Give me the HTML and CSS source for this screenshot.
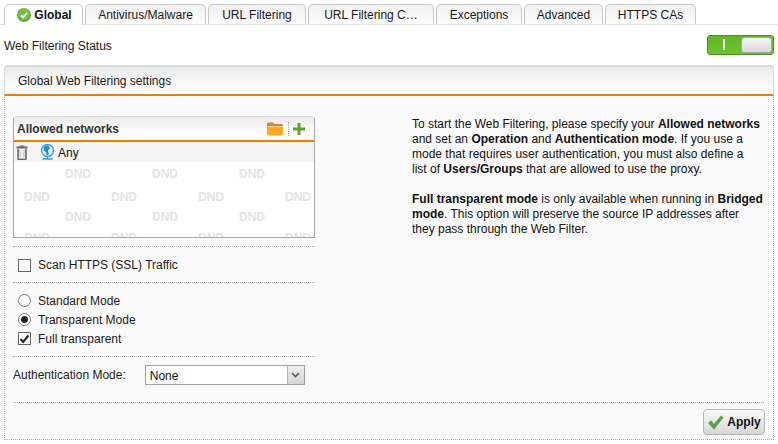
FILE: index.html
```html
<!DOCTYPE html>
<html lang="en">
<head>
<meta charset="utf-8">
<title>Web Filtering</title>
<link rel="stylesheet" href="styles.css">
</head>
<body>
<nav class="tabs">
  <div class="tab tab-active tab-global">
    <svg class="tab-icon" width="14" height="14" viewBox="0 0 16 16"><circle cx="8" cy="8" r="8" fill="#5fae34"/><circle cx="8" cy="7" r="6.500" fill="#74c043"/><path d="M4.5 8.2 7 10.8 11.6 5.4" fill="none" stroke="#fff" stroke-width="2.100"/></svg>
    <span>Global</span>
  </div>
  <div class="tab tab-antivirus">Antivirus/Malware</div>
  <div class="tab tab-url">URL Filtering</div>
  <div class="tab tab-urlc">URL Filtering C…</div>
  <div class="tab tab-exc">Exceptions</div>
  <div class="tab tab-adv">Advanced</div>
  <div class="tab tab-ca">HTTPS CAs</div>
</nav>

<div class="status-row">
  <span class="status-label">Web Filtering Status</span>
  <div class="toggle"><span class="toggle-bar"></span><span class="toggle-knob"></span></div>
</div>

<section class="panel">
  <header class="panel-header">Global Web Filtering settings</header>
  <div class="panel-body">
    <div class="columns">
      <div class="left">
        <div class="netbox">
          <div class="netbox-head">
            <span>Allowed networks</span>
            <div class="netbox-tools">
              <svg width="16" height="14" viewBox="0 0 16 14"><path d="M0 2Q0 .5 1.500 .5H6L7.500 2H14.500Q16 2 16 3.500V4H0Z" fill="#c98a35"/><path d="M0 4.500H16V12Q16 13.500 14.500 13.500H1.500Q0 13.500 0 12Z" fill="#fdab1e"/></svg>
              <span class="tool-sep"></span>
              <svg width="12" height="12" viewBox="0 0 12 12"><path d="M4.500 0H7.500V4.500H12V7.500H7.500V12H4.500V7.500H0V4.500H4.500Z" fill="#5aa527"/></svg>
            </div>
          </div>
          <div class="netbox-body">
            <div class="watermark">
              <div class="wm-row wm-a wm-1"><span>DND</span><span>DND</span><span>DND</span></div>
              <div class="wm-row wm-b wm-2"><span>DND</span><span>DND</span><span>DND</span><span>DND</span></div>
              <div class="wm-row wm-a wm-3"><span>DND</span><span>DND</span><span>DND</span></div>
              <div class="wm-row wm-b wm-4"><span>DND</span><span>DND</span><span>DND</span><span>DND</span></div>
            </div>
            <div class="net-row">
              <svg class="trash" width="12" height="15" viewBox="0 0 12 15"><path d="M.5 2.500H11.500" stroke="#666" stroke-width="2" fill="none"/><rect x="3.500" y=".5" width="5" height="1.500" fill="#777"/><path d="M2 4V13.500Q2 14.500 3 14.500H9Q10 14.500 10 13.500V4" fill="#eee" stroke="#666" stroke-width="1.500"/><path d="M4 5V12.500M8 5V12.500" stroke="#bbb"/></svg>
              <svg class="globe" width="15" height="16" viewBox="0 0 15 16"><circle cx="7.500" cy="6.500" r="6" fill="#dff2fb" stroke="#2a9fd8" stroke-width="1.300"/><path d="M4 2.500 8 1.500 10 4 8 7 9 10 7 11.500 6 8 3.500 6.500Z" fill="#1b8fcb"/><path d="M7.500 12.500V15M2.500 15H12.500" stroke="#2a9fd8" stroke-width="1.300" fill="none"/></svg>
              <span class="net-name">Any</span>
            </div>
          </div>
        </div>

        <div class="opt-section opt-https">
          <label class="opt"><span class="check check-big"></span><span>Scan HTTPS (SSL) Traffic</span></label>
        </div>

        <div class="opt-section opt-modes">
          <label class="opt"><span class="radio"></span><span>Standard Mode</span></label>
          <label class="opt"><span class="radio radio-on"></span><span>Transparent Mode</span></label>
          <label class="opt"><span class="check check-on"><svg width="11" height="10" viewBox="0 0 11 10"><path d="M1.500 5 4.200 8 9.500 1.500" fill="none" stroke="#222" stroke-width="2"/></svg></span><span>Full transparent</span></label>
        </div>

        <div class="opt-section opt-auth">
          <span>Authentication Mode:</span>
          <div class="select"><span class="select-value">None</span><span class="select-arrow"><svg width="9" height="6" viewBox="0 0 9 6"><path d="M1 1 4.500 4.500 8 1" fill="none" stroke="#555" stroke-width="1.600"/></svg></span></div>
        </div>
      </div>

      <div class="help">
        <p>To start the Web Filtering, please specify your <b>Allowed networks</b> and set an <b>Operation</b> and <b>Authentication mode</b>. If you use a mode that requires user authentication, you must also define a<br>list of <b>Users/Groups</b> that are allowed to use the proxy.</p>
        <p><b>Full transparent mode</b> is only available when running in <b>Bridged mode</b>. This option will preserve the source IP addresses after they pass through the Web Filter.</p>
      </div>
    </div>
    <footer class="panel-footer">
      <button class="apply" type="button">
        <svg width="17" height="15" viewBox="0 0 17 15"><path d="M1 8 4 5.500 7 9 14 .5 16.500 2.500 7 14.500Z" fill="#58a43c"/></svg>
        <span>Apply</span>
      </button>
    </footer>
  </div>
</section>
</body>
</html>
```
FILE: styles.css
```css
* { box-sizing: border-box; }
html, body { margin: 0; padding: 0; background: #fff; }
body {
  width: 778px;
  height: 444px;
  overflow: hidden;
  font: 12px/14px "Liberation Sans", Arial, sans-serif;
  color: #1a1a1a;
}
.tabs {
  display: flex;
  gap: 2px;
  height: 25px;
  padding: 4px 0 0 4px;
  border-bottom: 1px solid #e2e2e2;
}
.tab {
  display: flex;
  align-items: center;
  justify-content: center;
  height: 20px;
  border: 1px solid #c8c8c8;
  border-bottom: 0;
  border-radius: 5px 5px 0 0;
  background: linear-gradient(#f0f0f0, #fdfdfd);
  color: #1a1a1a;
}
.tab-active { background: #fff; height: 21px; font-weight: bold; color: #111; gap: 3px; }
.tab-icon { flex: none; }
.tab-global { width: 79px; padding-left: 2px; }
.tab-antivirus { width: 121px; }
.tab-url { width: 98px; }
.tab-urlc { width: 126px; }
.tab-exc { width: 86px; }
.tab-adv { width: 79px; }
.tab-ca { width: 91px; }

.status-row {
  display: flex;
  align-items: center;
  justify-content: space-between;
  height: 20px;
  margin-top: 10px;
  padding: 0 4px 0 4px;
}
.status-label { padding-top: 1px; }
.toggle {
  position: relative;
  width: 67px;
  height: 20px;
  background: linear-gradient(#62b526, #6cc42b);
  border: 1px solid #4e8f1f;
  border-radius: 3px;
}
.toggle-bar {
  position: absolute;
  left: 15px;
  top: 3px;
  width: 2px;
  height: 11px;
  background: #fff;
}
.toggle-knob {
  position: absolute;
  right: 1px;
  top: 1px;
  width: 31px;
  height: 16px;
  border: 1px solid #a5a5a5;
  border-radius: 3px;
  background: linear-gradient(#f6f6f6, #d8d8d8);
}

.panel {
  margin: 10px 4px 0 4px;
  height: 375px;
  width: 770px;
}
.panel-header {
  display: flex;
  align-items: center;
  height: 31px;
  padding: 0 0 0 13px;
  border: 1px solid #d9d9d9;
  border-top-width: 2px;
  border-bottom: 2px solid #ee8000;
  border-radius: 4px 4px 0 0;
  background: linear-gradient(#e9eaea, #fdfdfd 75%);
}
.panel-body {
  height: 344px;
  padding: 20px 8px 0 8px;
  background: #fafafa;
  border: 1px dotted #b0b0b0;
  border-top: 0;
}
.columns { display: flex; height: 286px; }
.left { width: 302px; flex: none; }

.netbox {
  width: 302px;
  height: 122px;
  border: 1px solid #a8a8a8;
  border-top-color: #d4d4d4;
  border-radius: 4px 4px 0 0;
  background: #fff;
}
.netbox-head {
  display: flex;
  align-items: center;
  justify-content: space-between;
  height: 25px;
  padding: 0 9px 0 3px;
  border-bottom: 2px solid #ee8000;
  background: linear-gradient(#ebebeb, #fff 70%);
  font-weight: bold;
  color: #333;
}
.netbox-tools { display: flex; align-items: center; gap: 4px; }
.tool-sep { width: 0; height: 14px; border-left: 1px dotted #aaa; margin-left: 1px; }
.netbox-body {
  position: relative;
  height: 95px;
  overflow: hidden;
}
.net-row {
  position: relative;
  display: flex;
  align-items: center;
  height: 20px;
  padding-left: 2px;
  background: #f5f5f5;
  color: #111;
}
.net-name { padding-top: 1px; }
.trash { margin-right: 12px; }
.globe { margin-right: 3px; }
.watermark {
  position: absolute;
  inset: 0;
  font-weight: bold;
  color: #e4e4e4;
}
.wm-row { position: absolute; display: flex; gap: 61px; }
.wm-row span { width: 26px; flex: none; }
.wm-a { left: 51px; }
.wm-b { left: 10px; }
.wm-1 { top: 25px; }
.wm-2 { top: 48px; }
.wm-3 { top: 68px; }
.wm-4 { top: 89px; }

.opt-section { border-top: 1px dotted #aaa; }
.opt {
  display: flex;
  align-items: center;
  gap: 7px;
  height: 19px;
  padding-left: 5px;
}
.opt-https { margin-top: 8px; padding: 11px 0 0; height: 36px; }
.opt-https .opt { height: 14px; }
.opt-modes { padding: 8px 0 0; height: 74px; }
.check {
  flex: none;
  width: 13px;
  height: 13px;
  border: 1px solid #666;
  background: #fff;
  display: flex;
  align-items: center;
  justify-content: center;
}
.radio {
  flex: none;
  width: 13px;
  height: 13px;
  border: 1px solid #777;
  border-radius: 50%;
  background: #fff;
  display: flex;
  align-items: center;
  justify-content: center;
}
.radio-on::after {
  content: "";
  width: 7px;
  height: 7px;
  border-radius: 50%;
  background: #222;
}
.opt-auth {
  display: flex;
  align-items: center;
  gap: 19px;
  height: 36px;
}
.select {
  display: flex;
  width: 160px;
  height: 20px;
  border: 1px solid #a0a0a0;
  background: #fff;
}
.select-value { flex: 1; padding: 3px 0 0 4px; color: #111; }
.select-arrow {
  width: 17px;
  display: flex;
  align-items: center;
  justify-content: center;
  background: linear-gradient(#f0f0f0, #d4d4d4);
  border-left: 1px solid #b5b5b5;
}

.help {
  width: 354px;
  margin-left: 97px;
  padding-top: 1px;
  color: #111;
}
.help p { margin: 0 0 15px; line-height: 15px; }

.panel-footer {
  display: flex;
  justify-content: flex-end;
  width: 751px;
  height: 38px;
  border-top: 1px dotted #aaa;
  padding-top: 6px;
}
.apply {
  display: flex;
  align-items: center;
  justify-content: center;
  gap: 3px;
  width: 62px;
  height: 26px;
  margin: 0 -1px 0 0;
  padding: 0;
  border: 1px solid #b5b5b5;
  border-radius: 4px;
  background: linear-gradient(#fbfbfb, #d6d6d6);
  font: bold 12px "Liberation Sans", Arial, sans-serif;
  color: #111;
}
```
